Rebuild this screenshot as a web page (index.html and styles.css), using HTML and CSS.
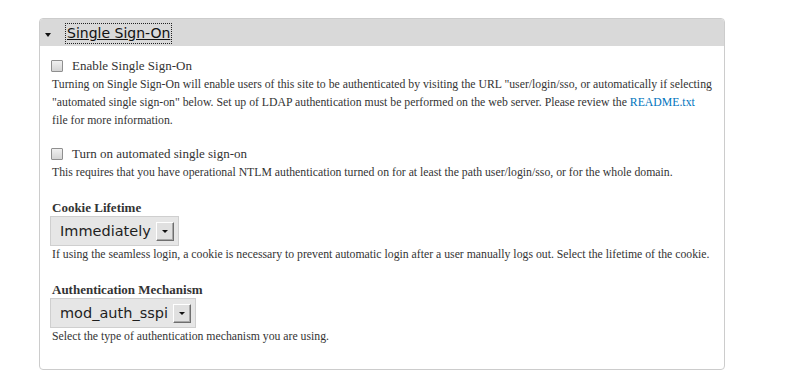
FILE: index.html
```html
<!DOCTYPE html>
<html>
<head>
<meta charset="utf-8">
<link rel="stylesheet" href="styles.css">
</head>
<body>
<div class="fieldset">
  <div class="legend">
    <span class="arrow"></span>
    <span class="legend-title">Single Sign-On</span>
  </div>
  <div class="content">
    <div class="item first">
      <div class="check-row"><span class="checkbox"></span><span class="check-label">Enable Single Sign-On</span></div>
      <div class="desc">Turning on Single Sign-On will enable users of this site to be authenticated by visiting the URL "user/login/sso, or automatically if selecting "automated single sign-on" below. Set up of LDAP authentication must be performed on the web server. Please review the <a class="link" href="#">README.txt</a><br>file for more information.</div>
    </div>
    <div class="item">
      <div class="check-row"><span class="checkbox"></span><span class="check-label">Turn on automated single sign-on</span></div>
      <div class="desc">This requires that you have operational NTLM authentication turned on for at least the path user/login/sso, or for the whole domain.</div>
    </div>
    <div class="item field">
      <div class="field-label">Cookie Lifetime</div>
      <div class="select"><span class="select-text">Immediately</span><span class="select-btn"><span class="tri"></span></span></div>
      <div class="desc">If using the seamless login, a cookie is necessary to prevent automatic login after a user manually logs out. Select the lifetime of the cookie.</div>
    </div>
    <div class="item field">
      <div class="field-label">Authentication Mechanism</div>
      <div class="select"><span class="select-text">mod_auth_sspi</span><span class="select-btn"><span class="tri"></span></span></div>
      <div class="desc">Select the type of authentication mechanism you are using.</div>
    </div>
  </div>
</div>
</body>
</html>
```
FILE: styles.css
```css
html, body {
  margin: 0;
  padding: 0;
  background: #fff;
}
body {
  font-family: "Liberation Serif", serif;
  color: #333;
}
.fieldset {
  margin: 18px 0 0 39px;
  border: 1px solid #ccc;
  border-radius: 4px;
  box-sizing: border-box;
  width: 686px;
  height: 352px;
}
.legend {
  height: 27px;
  background: #d9d9d9;
  border-radius: 3px 3px 0 0;
  display: flex;
  align-items: center;
  padding-left: 5px;
}
.arrow {
  width: 0;
  height: 0;
  border-left: 3px solid transparent;
  border-right: 3px solid transparent;
  border-top: 4px solid #111;
  margin-top: 4px;
}
.legend-title {
  margin-left: 15px;
  font-family: "DejaVu Sans", sans-serif;
  font-size: 14px;
  color: #111;
  text-decoration: underline;
  outline: 1px dotted #222;
  padding: 1px 1px 2px 1px;
  line-height: 16px;
  margin-top: 2px;
}
.content {
  padding: 11px 9px 0 12px;
}
.item {
  margin-top: 15px;
}
.item.first {
  margin-top: 0;
}
.item.field {
  margin-top: 16px;
}
.check-row {
  display: flex;
  align-items: center;
  height: 18px;
  margin-bottom: 1px;
}
.checkbox {
  width: 10px;
  height: 10px;
  border: 1px solid #8f8f8f;
  border-radius: 1px;
  background: linear-gradient(#f0f0f0, #d4d4d4);
  margin-left: -1px;
  margin-right: 9px;
}
.check-label {
  font-size: 13px;
  line-height: 18px;
  color: #333;
}
.desc {
  font-size: 11.75px;
  line-height: 18px;
  color: #333;
}
.link {
  color: #0074bd;
  text-decoration: none;
}
.field-label {
  font-weight: bold;
  font-size: 13px;
  line-height: 16px;
  padding-top: 2px;
  color: #333;
  margin-top: 1px;
}
.select {
  display: inline-flex;
  align-items: center;
  height: 30px;
  box-sizing: border-box;
  margin-left: -2px;
  padding: 0 4px 0 9px;
  background: #e6e6e6;
  border: 1px solid #cfcfcf;
  vertical-align: top;
}
.select-text {
  font-family: "DejaVu Sans", sans-serif;
  font-size: 14.5px;
  color: #1e1e1e;
}
.select-btn {
  margin-left: 5px;
  width: 18px;
  height: 19px;
  box-sizing: border-box;
  background: #e0e0e0;
  border-top: 1px solid #fff;
  border-left: 1px solid #fff;
  border-right: 1px solid #6e6e6e;
  border-bottom: 1px solid #6e6e6e;
  box-shadow: inset -1px -1px 0 #a8a8a8;
  display: flex;
  align-items: center;
  justify-content: center;
}
.tri {
  width: 0;
  height: 0;
  border-left: 3px solid transparent;
  border-right: 3px solid transparent;
  border-top: 3px solid #111;
}
```
